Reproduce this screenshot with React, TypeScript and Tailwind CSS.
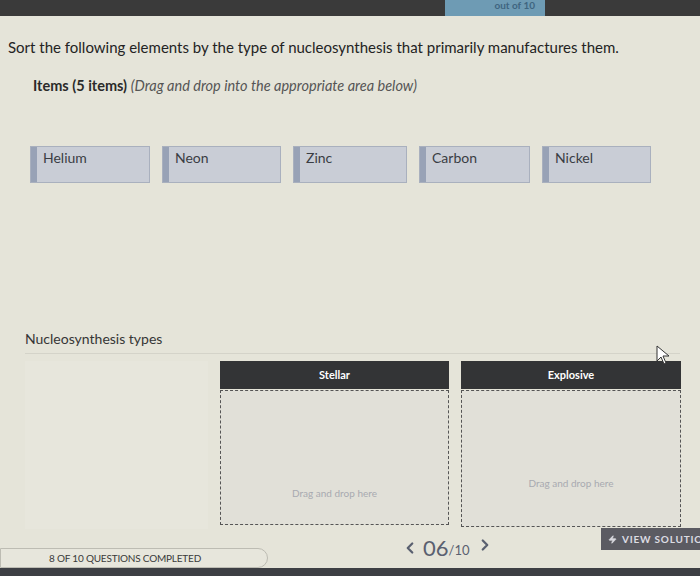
import { ChevronLeft, ChevronRight, Zap } from 'lucide-react'

const items = [
  { name: 'Helium', w: 'w-[120px]' },
  { name: 'Neon', w: 'w-[119px]' },
  { name: 'Zinc', w: 'w-[114px]' },
  { name: 'Carbon', w: 'w-[111px]' },
  { name: 'Nickel', w: 'w-[109px]' },
]

const zones = [
  { title: 'Stellar', w: 'w-[229px]', body: 'h-[135px]', pt: 'pt-[95px]' },
  { title: 'Explosive', w: 'w-[220px]', body: 'h-[137px]', pt: 'pt-[85px]' },
]

export default function App() {
  return (
    <div className="relative w-[700px] h-[576px] overflow-hidden bg-[#e5e4d9] flex flex-col" style={{ fontFamily: 'Lato, "Open Sans", sans-serif' }}>
      {/* Top bar */}
      <div className="h-[16px] bg-[#3a3a3a] flex shrink-0">
        <div className="ml-[445px] w-[100px] h-[16px] bg-[#6e9bb4] flex justify-end items-start pr-[10px]">
          <span className="text-[10px] leading-[11px] text-[#3f6580] font-bold">out of 10</span>
        </div>
      </div>

      {/* Question */}
      <p className="mt-[22px] ml-[8px] text-[15px] leading-[18px] text-[#232323]">
        Sort the following elements by the type of nucleosynthesis that primarily manufactures them.
      </p>
      <p className="mt-[21px] ml-[33px] text-[14.5px] leading-[18px] text-[#2a2a2a]">
        <span className="font-bold">Items (5 items)</span>{' '}
        <span className="italic text-[#555]">(Drag and drop into the appropriate area below)</span>
      </p>

      {/* Items */}
      <div className="mt-[51px] ml-[30px] flex gap-[12px]">
        {items.map(({ name, w }) => (
          <div key={name} className={`${w} h-[37px] flex bg-[#c9cdd6] border border-[#a9b0be]`}>
            <div className="w-[6px] bg-[#98a2b6]" />
            <span className="pl-[6px] pt-[2px] text-[14px] leading-[18px] text-[#3a3d44]">{name}</span>
          </div>
        ))}
      </div>

      {/* Types */}
      <div className="mt-[143px] ml-[25px] mr-[20px] border-b border-[#d4d3c9] pb-[3px]">
        <span className="text-[14px] leading-[18px] text-[#363636]">Nucleosynthesis types</span>
      </div>
      <div className="ml-[25px] flex gap-[12px] mt-[7px]">
        <div className="w-[183px] h-[168px] bg-[#e7e6dc]" />
        {zones.map(({ title, w, body, pt }) => (
          <div key={title} className={`${w} h-[168px] flex flex-col`}>
            <div className="h-[28px] bg-[#333436] flex items-center justify-center">
              <span className="text-[11px] font-bold text-white">{title}</span>
            </div>
            <div className={`${body} ${pt} mt-[1px] border border-dashed border-[#555] bg-[#e1e0d8] flex justify-center`}>
              <span className="text-[10px] text-[#a8aab0]">Drag and drop here</span>
            </div>
          </div>
        ))}
      </div>

      {/* Bottom row */}
      <div className="mt-auto h-[48px] flex items-end relative">
        <div className="w-[268px] h-[20px] border border-[#bdbcb3] rounded-r-[10px] bg-[#e7e6dc] flex items-center pl-[48px]">
          <span className="text-[10px] text-[#3a3a3a] tracking-[-0.2px]">8 OF 10 QUESTIONS COMPLETED</span>
        </div>
        <div className="ml-[133px] mb-[6px] flex items-center text-[#5a6070]">
          <ChevronLeft size={18} strokeWidth={3} />
          <span className="ml-[4px] text-[22px] leading-[24px]">06</span>
          <span className="text-[13px] leading-[24px] mt-[4px]">/10</span>
          <ChevronRight size={18} strokeWidth={3} className="ml-[6px] -mt-[6px]" />
        </div>
        <div className="absolute right-0 bottom-[18px] w-[99px] h-[22px] bg-[#5b5b62] flex items-center pl-[7px] gap-[5px] overflow-hidden">
          <Zap size={9} className="text-[#d9d9df] shrink-0" fill="#d9d9df" />
          <span className="text-[10px] font-bold tracking-[0.8px] text-[#dcdce2] whitespace-nowrap">VIEW SOLUTION</span>
        </div>
      </div>
      <div className="h-[8px] bg-[#3d3f44] shrink-0" />

      {/* Cursor */}
      <svg className="absolute left-[656px] top-[345px]" width="14" height="20" viewBox="0 0 14 20">
        <path d="M1 1 L1 16 L5 12 L8 19 L10 18 L7 11 L13 11 Z" fill="#fff" stroke="#333" strokeWidth="1" />
      </svg>
    </div>
  )
}
